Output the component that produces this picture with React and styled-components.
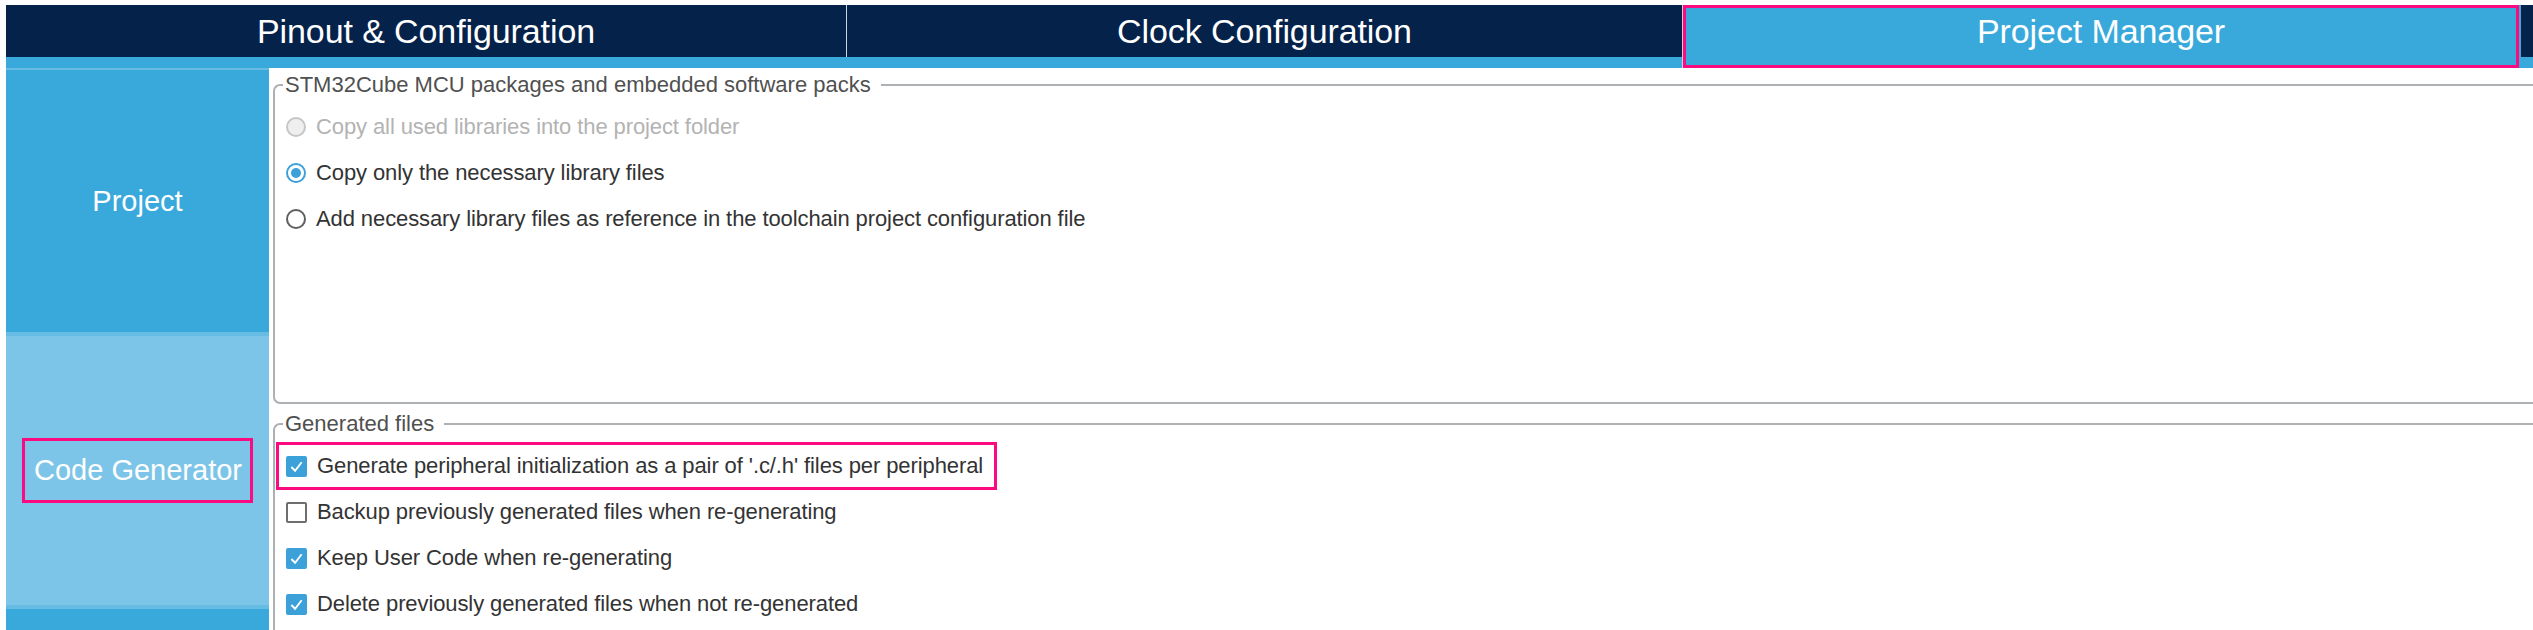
import React from 'react'
import styled, { createGlobalStyle } from 'styled-components'

const GlobalStyle = createGlobalStyle`
  html, body {
    margin: 0;
    padding: 0;
    background: #ffffff;
    overflow: hidden;
  }
  body {
    font-family: "Liberation Sans", Arial, sans-serif;
  }
`

const NAVY = '#04224a'
const BLUE = '#39a9dc'
const LIGHT = '#7dc5e8'
const PINK = '#fb0a80'

const tabs = [
  { label: 'Pinout & Configuration', width: 840 },
  { label: 'Clock Configuration', width: 836 },
  { label: 'Project Manager', width: 837, active: true },
]

const packOptions = [
  { label: 'Copy all used libraries into the project folder', state: 'disabled' },
  { label: 'Copy only the necessary library files', state: 'checked' },
  { label: 'Add necessary library files as reference in the toolchain project configuration file', state: 'off' },
]

const fileOptions = [
  { label: "Generate peripheral initialization as a pair of '.c/.h' files per peripheral", checked: true, marked: true },
  { label: 'Backup previously generated files when re-generating', checked: false },
  { label: 'Keep User Code when re-generating', checked: true },
  { label: 'Delete previously generated files when not re-generated', checked: true },
]

const App = () => {
  return (
    <Page>
      <GlobalStyle />
      <TabBar>
        {tabs.map((tab, i) => (
          <Tab key={tab.label} $width={tab.width} $active={tab.active} $first={i === 0}>
            {tab.label}
          </Tab>
        ))}
        <TabFiller />
      </TabBar>

      <Body>
        <Sidebar>
          <SideTile $height={262}>Project</SideTile>
          <SideTile $height={269} $light>
            <Marked>Code Generator</Marked>
          </SideTile>
          <SideTile $height={269} />
        </Sidebar>

        <Content>
          <Group $height={332}>
            <Legend>STM32Cube MCU packages and embedded software packs</Legend>
            {packOptions.map(opt => (
              <Row key={opt.label}>
                <Radio $state={opt.state} />
                <Label $disabled={opt.state === 'disabled'}>{opt.label}</Label>
              </Row>
            ))}
          </Group>

          <Group $height={260}>
            <Legend>Generated files</Legend>
            {fileOptions.map(opt => (
              <Row key={opt.label} $marked={opt.marked}>
                <Check $checked={opt.checked}>
                  {opt.checked && (
                    <svg width="15" height="15" viewBox="0 0 16 16">
                      <polyline points="2.5,8.5 6.5,12.5 13.5,3.5" fill="none" stroke="#ffffff" strokeWidth="2" />
                    </svg>
                  )}
                </Check>
                <Label>{opt.label}</Label>
              </Row>
            ))}
          </Group>
        </Content>
      </Body>
    </Page>
  )
}

const Page = styled.div`
  height: 100vh;
  padding: 5px 0 0 6px;
  box-sizing: border-box;
  display: flex;
  flex-direction: column;
  overflow: hidden;
`

const TabBar = styled.div`
  display: flex;
  align-items: flex-start;
  height: 63px;
  flex-shrink: 0;
  background: ${BLUE};
`

const Tab = styled.div`
  width: ${p => p.$width}px;
  height: ${p => (p.$active ? 63 : 52)}px;
  box-sizing: border-box;
  display: flex;
  align-items: center;
  justify-content: center;
  padding-bottom: ${p => (p.$active ? 11 : 0)}px;
  background: ${p => (p.$active ? BLUE : NAVY)};
  border-left: ${p => (p.$first ? 'none' : '1px solid #c9d3de')};
  box-shadow: ${p => (p.$active ? `inset 0 0 0 3px ${PINK}` : 'none')};
  color: #ffffff;
  font-size: 34px;
  letter-spacing: -0.1px;
`

const TabFiller = styled.div`
  flex: 1;
  height: 52px;
  margin-left: 2px;
  background: ${NAVY};
`

const Body = styled.div`
  flex: 1;
  min-height: 0;
  display: grid;
  grid-template-columns: 263px 1fr;
`

const Sidebar = styled.div`
  display: flex;
  flex-direction: column;
  gap: 4px;
  padding-top: 2px;
  background: #67bce4;
  overflow: hidden;
`

const SideTile = styled.div`
  height: ${p => p.$height}px;
  flex-shrink: 0;
  display: flex;
  align-items: center;
  justify-content: center;
  background: ${p => (p.$light ? LIGHT : BLUE)};
  color: #ffffff;
  font-size: 29px;
`

const Marked = styled.span`
  display: inline-block;
  padding: 13px 8px 13px 9px;
  border: 3px solid ${PINK};
`

const Content = styled.div`
  padding: 4px 0 0 4px;
  display: flex;
  flex-direction: column;
  gap: 7px;
  overflow: hidden;
`

const Group = styled.fieldset`
  margin: 0;
  height: ${p => p.$height}px;
  box-sizing: border-box;
  flex-shrink: 0;
  padding: 7px 0 0 11px;
  border: 2px solid #aeb1b4;
  border-right: none;
  border-radius: 7px 0 0 7px;
`

const Legend = styled.legend`
  margin-left: -3px;
  padding: 0 10px 0 2px;
  font-size: 22px;
  line-height: 25px;
  color: #505050;
`

const Row = styled.div`
  display: flex;
  align-items: center;
  gap: 10px;
  height: 46px;
  width: fit-content;
  padding-right: 13px;
  outline: ${p => (p.$marked ? `3px solid ${PINK}` : 'none')};
  outline-offset: -2px;
  margin-left: ${p => (p.$marked ? '-9px' : '0')};
  padding-left: ${p => (p.$marked ? '9px' : '0')};
`

const radioRing = {
  disabled: '#c6c6c6',
  checked: '#3ba1d8',
  off: '#5e5e5e',
}

const Radio = styled.span`
  position: relative;
  width: 20px;
  height: 20px;
  box-sizing: border-box;
  border-radius: 50%;
  border: 2px solid ${p => radioRing[p.$state]};
  background: ${p => (p.$state === 'disabled' ? '#efefef' : '#ffffff')};

  &::after {
    content: '';
    display: ${p => (p.$state === 'checked' ? 'block' : 'none')};
    position: absolute;
    inset: 3px;
    border-radius: 50%;
    background: #3ba1d8;
  }
`

const Check = styled.span`
  width: 21px;
  height: 21px;
  box-sizing: border-box;
  display: flex;
  align-items: center;
  justify-content: center;
  border-radius: 2px;
  border: 2px solid ${p => (p.$checked ? '#3ba1d8' : '#6e6e6e')};
  background: ${p => (p.$checked ? '#3ba1d8' : '#ffffff')};
`

const Label = styled.span`
  font-size: 22px;
  letter-spacing: -0.1px;
  color: ${p => (p.$disabled ? '#b3b3b3' : '#333333')};
  white-space: nowrap;
`

export default App
